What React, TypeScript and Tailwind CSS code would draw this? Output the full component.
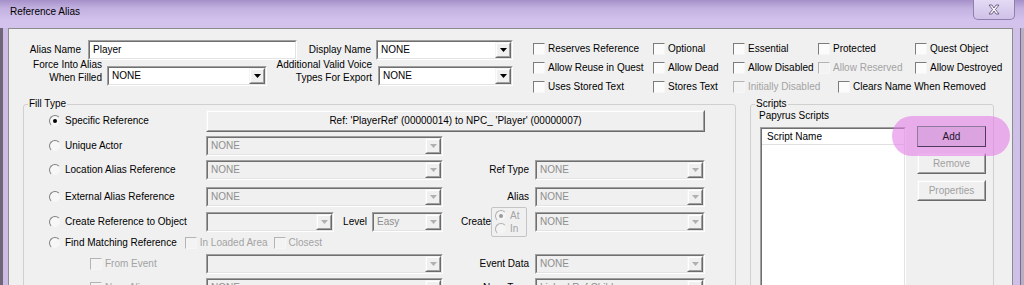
import React from 'react';

const outerSunken = "border border-t-[#a0a0a0] border-l-[#a0a0a0] border-r-white border-b-white";
const innerSunken = "border border-t-[#6f6f6f] border-l-[#6f6f6f] border-r-[#e3e3e3] border-b-[#e3e3e3]";
const outerRaised = "border border-t-[#f4f4f4] border-l-[#f4f4f4] border-r-[#6a6a6a] border-b-[#6a6a6a]";
const innerRaised = "border border-t-white border-l-white border-r-[#a0a0a0] border-b-[#a0a0a0]";

function Check({ label, disabled }: { label: string; disabled?: boolean }) {
  return (
    <div className="flex items-center">
      <span
        className={`w-[12px] h-[12px] shrink-0 border ${
          disabled
            ? 'border-t-[#b4b4b4] border-l-[#b4b4b4] border-r-[#f6f6f6] border-b-[#f6f6f6] bg-[#f3f3f3]'
            : 'border-t-[#7c7c7c] border-l-[#7c7c7c] border-r-[#f6f6f6] border-b-[#f6f6f6] bg-[#fbfbfb]'
        }`}
      />
      <span className={`ml-[3px] whitespace-nowrap ${disabled ? 'text-[#a3a3a3]' : 'text-black'}`}>{label}</span>
    </div>
  );
}

function Radio({ checked, disabled }: { checked?: boolean; disabled?: boolean }) {
  return (
    <span
      className={`w-[12px] h-[12px] shrink-0 rounded-full border flex items-center justify-center ${
        disabled
          ? 'border-t-[#b0b0b0] border-l-[#b0b0b0] border-r-[#f0f0f0] border-b-[#f0f0f0] bg-[#f4f4f4]'
          : 'border-t-[#808080] border-l-[#808080] border-r-[#f0f0f0] border-b-[#f0f0f0] bg-[#f7f7f7]'
      }`}
    >
      {checked && <span className={`w-[4px] h-[4px] rounded-full ${disabled ? 'bg-[#9a9a9a]' : 'bg-black'}`} />}
    </span>
  );
}

function RadioLabel({ label, checked }: { label: string; checked?: boolean }) {
  return (
    <div className="flex items-center">
      <Radio checked={checked} />
      <span className="ml-[4px] whitespace-nowrap text-black">{label}</span>
    </div>
  );
}

function Combo({ className, value, disabled }: { className: string; value?: string; disabled?: boolean }) {
  return (
    <div className={`${className} h-[20px] shrink-0 ${outerSunken}`}>
      <div className={`h-full flex ${innerSunken} ${disabled ? 'bg-[#f0f0f0]' : 'bg-white'}`}>
        <div className={`flex-1 pl-[3px] flex items-center whitespace-nowrap ${disabled ? 'text-[#8e8e8e]' : 'text-black'}`}>
          {value}
        </div>
        <div className={`w-[16px] h-full ${outerRaised} bg-[#f0f0f0]`}>
          <div className={`w-full h-full ${innerRaised} flex items-center justify-center`}>
            <svg width="7" height="4" viewBox="0 0 7 4">
              <path d="M0 0H7L3.5 4Z" fill={disabled ? '#b0b0b0' : '#000'} />
            </svg>
          </div>
        </div>
      </div>
    </div>
  );
}

function Input({ className, value }: { className: string; value: string }) {
  return (
    <div className={`${className} h-[20px] shrink-0 ${outerSunken}`}>
      <div className={`h-full flex items-center pl-[3px] bg-white ${innerSunken}`}>{value}</div>
    </div>
  );
}

function Btn({ className, label, disabled }: { className: string; label: string; disabled?: boolean }) {
  return (
    <div className={`${className} shrink-0 ${outerRaised} bg-[#f0f0f0]`}>
      <div className={`w-full h-full ${innerRaised} flex items-center justify-center whitespace-nowrap ${disabled ? 'text-[#a0a0a0]' : 'text-black'}`}>
        {label}
      </div>
    </div>
  );
}

function Label({ className, children }: { className: string; children: React.ReactNode }) {
  return <div className={`${className} shrink-0 text-right whitespace-nowrap text-black`}>{children}</div>;
}

export default function App() {
  return (
    <div className="w-[1024px] h-[285px] overflow-hidden relative flex flex-col font-['Liberation_Sans',Arial,sans-serif] text-[10px] leading-[12px] bg-[linear-gradient(180deg,#a590c8_0px,#c2b0e0_8px,#d2c2ec_20px,#d6c7ee_100%)]">
      {/* Title bar */}
      <div className="h-[28px] shrink-0 flex items-start">
        <div className="pl-[10px] pt-[6px] text-black">Reference Alias</div>
        <div className="ml-auto mr-[9px] w-[42px] h-[20px] rounded-b-[5px] border border-t-0 border-[#8f7fad] bg-[linear-gradient(180deg,#e4daf4,#cfc1e8)] flex items-center justify-center">
          <svg width="12" height="11" viewBox="0 0 12 11">
            <path d="M1 1H4L6 4L8 1H11L7.5 5.5L11 10H8L6 7L4 10H1L4.5 5.5Z" fill="#f7f4fb" stroke="#5a4d6e" strokeWidth="0.8" />
          </svg>
        </div>
      </div>

      <div className="flex flex-1 min-h-0">
        <div className="w-[8px] shrink-0 flex">
          <div className="w-[3px] bg-[#6e6578]" />
          <div className="flex-1 bg-[#cdbde6]" />
        </div>

        {/* Client */}
        <div className="flex-1 border border-b-0 border-[#8c8c8c] bg-[#f0f0f0] pt-[10px]">
          {/* Top section */}
          <div className="flex">
            <div className="flex flex-col">
              <div className="flex items-center h-[20px] mt-[1px]">
                <Label className="w-[72px]">Alias Name</Label>
                <Input className="ml-[7px] w-[209px]" value="Player" />
                <Label className="w-[74px]">Display Name</Label>
                <Combo className="ml-[5px] w-[137px]" value="NONE" />
              </div>
              <div className="flex items-center h-[20px] mt-[6px]">
                <Label className="w-[93px] leading-[13px] mb-[11px]">
                  Force Into Alias
                  <br />
                  When Filled
                </Label>
                <Combo className="ml-[5px] w-[160px]" value="NONE" />
                <Label className="w-[105px] leading-[13px] mb-[11px]">
                  Additional Valid Voice
                  <br />
                  Types For Export
                </Label>
                <Combo className="ml-[6px] w-[135px]" value="NONE" />
              </div>
            </div>

            <div className="ml-[20px] flex flex-col">
              <div className="flex items-center h-[19px]">
                <div className="w-[120px]"><Check label="Reserves Reference" /></div>
                <div className="w-[80px]"><Check label="Optional" /></div>
                <div className="w-[85px]"><Check label="Essential" /></div>
                <div className="w-[97px]"><Check label="Protected" /></div>
                <Check label="Quest Object" />
              </div>
              <div className="flex items-center h-[19px]">
                <div className="w-[120px]"><Check label="Allow Reuse in Quest" /></div>
                <div className="w-[80px]"><Check label="Allow Dead" /></div>
                <div className="w-[85px]"><Check label="Allow Disabled" /></div>
                <div className="w-[97px]"><Check label="Allow Reserved" disabled /></div>
                <Check label="Allow Destroyed" />
              </div>
              <div className="flex items-center h-[19px]">
                <div className="w-[120px]"><Check label="Uses Stored Text" /></div>
                <div className="w-[80px]"><Check label="Stores Text" /></div>
                <div className="w-[105px]"><Check label="Initially Disabled" disabled /></div>
                <Check label="Clears Name When Removed" />
              </div>
            </div>
          </div>

          {/* Group boxes */}
          <div className="flex items-start mt-[2px]">
            <fieldset className="ml-[14px] w-[713px] border border-[#d0d0d0] rounded-[3px] pb-[10px]">
              <legend className="ml-[4px] px-[1px] leading-[12px] text-black">Fill Type</legend>

              <div className="flex items-center h-[22px]">
                <div className="w-[182px] shrink-0 pl-[25px]"><RadioLabel label="Specific Reference" checked /></div>
                <Btn className="w-[499px] h-[22px]" label="Ref: 'PlayerRef' (00000014) to NPC_ 'Player' (00000007)" />
              </div>

              <div className="flex items-center h-[20px] mt-[4px]">
                <div className="w-[182px] shrink-0 pl-[25px]"><RadioLabel label="Unique Actor" /></div>
                <Combo className="w-[237px]" value="NONE" disabled />
              </div>

              <div className="flex items-center h-[20px] mt-[4px]">
                <div className="w-[182px] shrink-0 pl-[25px]"><RadioLabel label="Location Alias Reference" /></div>
                <Combo className="w-[237px]" value="NONE" disabled />
                <Label className="w-[86px]">Ref Type</Label>
                <Combo className="ml-[6px] w-[170px]" value="NONE" disabled />
              </div>

              <div className="flex items-center h-[20px] mt-[7px]">
                <div className="w-[182px] shrink-0 pl-[25px]"><RadioLabel label="External Alias Reference" /></div>
                <Combo className="w-[237px]" value="NONE" disabled />
                <Label className="w-[86px]">Alias</Label>
                <Combo className="ml-[6px] w-[170px]" value="NONE" disabled />
              </div>

              <div className="flex items-center h-[20px] mt-[5px]">
                <div className="w-[182px] shrink-0 pl-[25px]"><RadioLabel label="Create Reference to Object" /></div>
                <Combo className="w-[128px]" disabled />
                <Label className="w-[38px] pr-[5px]">Level</Label>
                <Combo className="w-[71px]" value="Easy" disabled />
                <Label className="w-[48px]">Create</Label>
                <div className="w-[36px] h-[30px] shrink-0 border border-[#c4c4c4] rounded-[2px] flex flex-col justify-center pl-[3px] gap-[1px] text-[#a3a3a3]">
                  <div className="flex items-center h-[12px]"><Radio checked disabled /><span className="ml-[3px]">At</span></div>
                  <div className="flex items-center h-[12px]"><Radio disabled /><span className="ml-[3px]">In</span></div>
                </div>
                <Combo className="ml-[8px] w-[170px]" value="NONE" disabled />
              </div>

              <div className="flex items-center h-[16px] mt-[3px]">
                <div className="pl-[25px]"><RadioLabel label="Find Matching Reference" /></div>
                <div className="ml-[8px]"><Check label="In Loaded Area" disabled /></div>
                <div className="ml-[6px]"><Check label="Closest" disabled /></div>
              </div>

              <div className="flex items-center h-[20px] mt-[3px]">
                <div className="w-[182px] shrink-0 pl-[66px]"><Check label="From Event" disabled /></div>
                <Combo className="w-[237px]" disabled />
                <Label className="w-[86px]">Event Data</Label>
                <Combo className="ml-[6px] w-[170px]" value="NONE" disabled />
              </div>

              <div className="flex items-center h-[20px] mt-[4px]">
                <div className="w-[182px] shrink-0 pl-[66px]"><Check label="Near Alias" disabled /></div>
                <Combo className="w-[237px]" value="NONE" disabled />
                <Label className="w-[86px]">Near Type</Label>
                <Combo className="ml-[6px] w-[170px]" value="Linked Ref Child" disabled />
              </div>
            </fieldset>

            <fieldset className="ml-[14px] w-[244px] border border-[#d0d0d0] rounded-[3px] pb-[10px]">
              <legend className="ml-[4px] px-[1px] leading-[12px] text-black">Scripts</legend>
              <div className="ml-[8px] leading-[12px] text-black">Papyrus Scripts</div>
              <div className="flex mt-[5px]">
                <div className={`ml-[9px] w-[146px] h-[170px] shrink-0 ${outerSunken}`}>
                  <div className={`w-full h-full bg-white ${innerSunken}`}>
                    <div className="h-[16px] border-b border-[#e0e0e0] flex items-center pl-[5px] text-black">Script Name</div>
                  </div>
                </div>
                <div className="ml-[11px] flex flex-col">
                  <div className="relative z-10 -mt-[1px] w-[69px] h-[21px] border border-t-[#8f7a9c] border-l-[#8f7a9c] border-r-[#4e3a5c] border-b-[#4e3a5c] bg-[#dba3df] flex items-center justify-center text-[#24162e]">Add</div>
                  <Btn className="mt-[6px] w-[69px] h-[21px]" label="Remove" disabled />
                  <Btn className="mt-[6px] w-[69px] h-[21px]" label="Properties" disabled />
                </div>
              </div>
            </fieldset>
          </div>
        </div>

        <div className="w-[11px] shrink-0 flex">
          <div className="w-[7px] bg-[#cfc0e8]" />
          <div className="w-[1px] bg-[#7c6a95]" />
          <div className="flex-1 bg-[#b8b0c2]" />
        </div>
      </div>

      {/* Highlight annotation */}
      <div className="absolute z-0 left-[892px] top-[116px] w-[118px] h-[40px] rounded-full bg-[#e47ee8]/60 pointer-events-none" />
    </div>
  );
}
